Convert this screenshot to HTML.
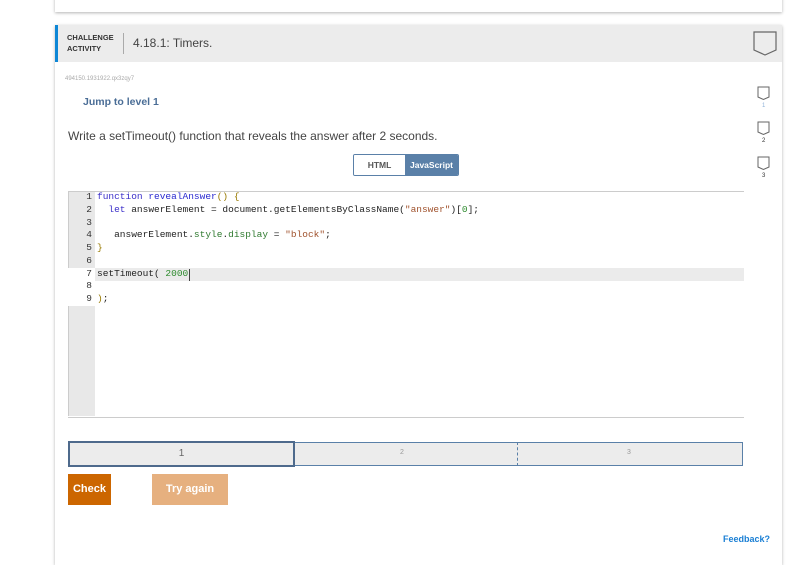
<!DOCTYPE html>
<html><head><style>
body{margin:0;width:798px;height:553px;background:#fff;font-family:"Liberation Sans",sans-serif;position:relative;overflow:hidden}
.card{position:absolute;background:#fff;box-shadow:0 1px 3px rgba(0,0,0,.3)}
.abs{position:absolute}
.code{font-family:"Liberation Mono",monospace;font-size:9.5px;line-height:12.75px;white-space:pre}
.kw{color:#3b2fc9}.fn{color:#2a2ad0}.pr{color:#2f7a2f}.st{color:#a0522d}.br{color:#997a00}.nm{color:#2e8b2e}
</style></head><body>
<div class="card" style="left:55px;top:-10px;width:727px;height:22px"></div>
<div class="card" style="left:55px;top:25px;width:727px;height:540px">
  <div class="abs" style="left:0;top:0;width:727px;height:37px;background:#ececec"></div>
  <div class="abs" style="left:0;top:0;width:3px;height:37px;background:#0e87d6"></div>
  <div class="abs" style="left:12px;top:7px;font-size:7.5px;font-weight:bold;color:#333;line-height:11px">CHALLENGE<br>ACTIVITY</div>
  <div class="abs" style="left:68px;top:8px;width:1px;height:21px;background:#aaa"></div>
  <div class="abs" style="left:78px;top:11px;font-size:12px;color:#444">4.18.1: Timers.</div>
  <svg class="abs" style="left:698px;top:6px" width="25" height="28"><path d="M1 1H23V19L12 24L1 19Z" fill="none" stroke="#666" stroke-width="1.2"/></svg>
  <div class="abs" style="left:10px;top:51px;font-size:6px;color:#aaa">494150.1931922.qx3zqy7</div>
  <div class="abs" style="left:28px;top:71px;font-size:10.5px;font-weight:bold;color:#4a6d96">Jump to level 1</div>
  <div class="abs" style="left:13px;top:104px;font-size:12px;color:#444">Write a setTimeout() function that reveals the answer after 2 seconds.</div>
  <div class="abs" style="left:298px;top:129px;width:104px;height:20px;border:1px solid #5a80a8;border-radius:2px;overflow:hidden;font-size:8.5px;font-weight:bold">
    <div class="abs" style="left:0;top:0;width:51px;height:20px;background:#fff;color:#555;text-align:center;line-height:20px">HTML</div>
    <div class="abs" style="left:51px;top:0;width:53px;height:20px;background:#5a80a8;color:#fff;text-align:center;line-height:20px">JavaScript</div>
  </div>
</div>
<svg class="abs" style="left:757px;top:86px" width="14" height="16"><path d="M1 1H12V11L6.5 13.5L1 11Z" fill="none" stroke="#666"/></svg>
<div class="abs" style="left:762px;top:103px;font-size:6px;color:#8fb3d9">1</div>
<svg class="abs" style="left:757px;top:121px" width="14" height="16"><path d="M1 1H12V11L6.5 13.5L1 11Z" fill="none" stroke="#666"/></svg>
<div class="abs" style="left:762px;top:138px;font-size:6px;color:#333">2</div>
<svg class="abs" style="left:757px;top:156px" width="14" height="16"><path d="M1 1H12V11L6.5 13.5L1 11Z" fill="none" stroke="#666"/></svg>
<div class="abs" style="left:762px;top:173px;font-size:6px;color:#333">3</div>
<div class="abs" style="left:68px;top:191px;width:676px;height:225px;border-top:1px solid #ccc;border-bottom:1px solid #ccc"></div>
<div class="abs" style="left:68px;top:192px;width:27px;height:224px;background:#e8e8e8;border-left:1px solid #ccc;box-sizing:border-box"></div>
<div class="abs" style="left:95px;top:268px;width:649px;height:13px;background:#ebebeb"></div>
<div class="abs" style="left:68px;top:268px;width:27px;height:38px;background:#fff"></div>
<div class="abs code" style="left:70px;top:191px;width:22px;text-align:right;color:#333">1
2
3
4
5
6
7
8
9</div>
<div class="abs code" style="left:97px;top:191px;color:#222"><span class="kw">function</span> <span class="fn">revealAnswer</span><span class="br">() {</span>
  <span class="kw">let</span> answerElement = document.getElementsByClassName(<span class="st">"answer"</span>)[<span class="nm">0</span>];

   answerElement.<span class="pr">style</span>.<span class="pr">display</span> = <span class="st">"block"</span>;
<span class="br">}</span>

setTimeout( <span class="nm">2000</span>

<span class="br">)</span>;</div>
<div class="abs" style="left:189px;top:269px;width:1px;height:12px;background:#444"></div>
<div class="abs" style="left:68px;top:442px;width:675px;height:24px;background:#ececec;border:1px solid #5a80a8;box-sizing:border-box"></div>
<div class="abs" style="left:517px;top:442px;height:24px;border-left:1px dashed #5a80a8"></div>
<div class="abs" style="left:68px;top:441px;width:227px;height:26px;border:2px solid #4e6a8c;box-sizing:border-box;text-align:center;line-height:22px;font-size:10px;color:#666">1</div>
<div class="abs" style="left:400px;top:449px;font-size:7px;color:#999">2</div>
<div class="abs" style="left:627px;top:449px;font-size:7px;color:#999">3</div>
<div class="abs" style="left:68px;top:474px;width:43px;height:31px;background:#cc6600;color:#fff;font-size:11px;font-weight:bold;text-align:center;line-height:31px">Check</div>
<div class="abs" style="left:152px;top:474px;width:76px;height:31px;background:#e6b07f;color:#fff;font-size:11px;font-weight:bold;text-align:center;line-height:31px">Try again</div>
<div class="abs" style="left:723px;top:534px;font-size:9px;font-weight:bold;color:#1a7fd4">Feedback?</div>
</body></html>
